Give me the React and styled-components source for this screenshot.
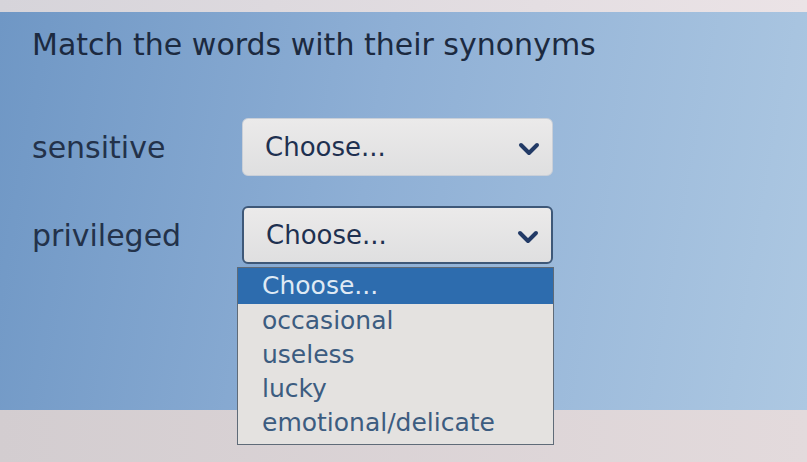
import React from 'react'
import styled, { createGlobalStyle, css } from 'styled-components'

const Global = createGlobalStyle`
  html, body { margin: 0; padding: 0; }
  body {
    width: 807px;
    height: 462px;
    overflow: hidden;
    background: #dcd6d9;
    font-family: "DejaVu Sans", Verdana, sans-serif;
  }
`

const Page = styled.div`
  display: flex;
  flex-direction: column;
  width: 807px;
  height: 462px;
`

const TopStrip = styled.div`
  height: 12px;
  background: linear-gradient(to right, #d6d4da, #ebe3e6);
`

const Panel = styled.div`
  position: relative;
  flex: 1;
  padding: 16px 32px 0;
  background: linear-gradient(100deg, #6f97c5 0%, #8eafd5 45%, #adc8e2 100%);
`

const Footer = styled.div`
  height: 52px;
  background: linear-gradient(to right, #d3cdd0, #e3dadc);
`

const Title = styled.h1`
  margin: 0 0 56px;
  font-size: 30px;
  font-weight: normal;
  line-height: 34px;
  color: #1c2a40;
`

const Form = styled.div`
  display: grid;
  grid-template-columns: 210px 311px;
  row-gap: 30px;
  align-items: center;
`

const Label = styled.div`
  font-size: 30px;
  color: #23324a;
`

const Field = styled.div`
  position: relative;
`

const Select = styled.div`
  display: flex;
  align-items: center;
  justify-content: space-between;
  box-sizing: border-box;
  height: 58px;
  padding: 0 12px 0 22px;
  border-radius: 6px;
  background: linear-gradient(#ebeaea, #dfdfe0);
  border: 1px solid #c9cfd8;
  color: #1e3050;
  font-size: 26px;

  ${props => props.focused && css`
    border: 2px solid #3e5878;
  `}
`

const Chevron = styled.svg`
  width: 22px;
  height: 16px;
  margin-top: 4px;
`

const Options = styled.ul`
  position: absolute;
  top: 61px;
  left: -5px;
  width: 317px;
  box-sizing: border-box;
  margin: 0;
  padding: 0 0 4px;
  list-style: none;
  background: #e4e2e0;
  border: 1px solid #5f6b78;
`

const Option = styled.li`
  height: 34px;
  line-height: 34px;
  padding-left: 24px;
  font-size: 25px;
  color: #3c5c80;

  ${props => props.selected && css`
    height: 36px;
    line-height: 36px;
    background: #2d6cae;
    color: #dfe9f4;
  `}
`

const choices = ['Choose...', 'occasional', 'useless', 'lucky', 'emotional/delicate']

const Arrow = () => (
  <Chevron viewBox="0 0 22 16">
    <path d="M3 4 L11 12 L19 4" fill="none" stroke="#223a66" strokeWidth="4" strokeLinecap="round" strokeLinejoin="round" />
  </Chevron>
)

export default function App() {
  return (
    <Page>
      <Global />
      <TopStrip />
      <Panel>
        <Title>Match the words with their synonyms</Title>
        <Form>
          <Label>sensitive</Label>
          <Field>
            <Select>
              Choose...
              <Arrow />
            </Select>
          </Field>
          <Label>privileged</Label>
          <Field>
            <Select focused>
              Choose...
              <Arrow />
            </Select>
            <Options>
              {choices.map((c, i) => (
                <Option key={c} selected={i === 0}>{c}</Option>
              ))}
            </Options>
          </Field>
        </Form>
      </Panel>
      <Footer />
    </Page>
  )
}
